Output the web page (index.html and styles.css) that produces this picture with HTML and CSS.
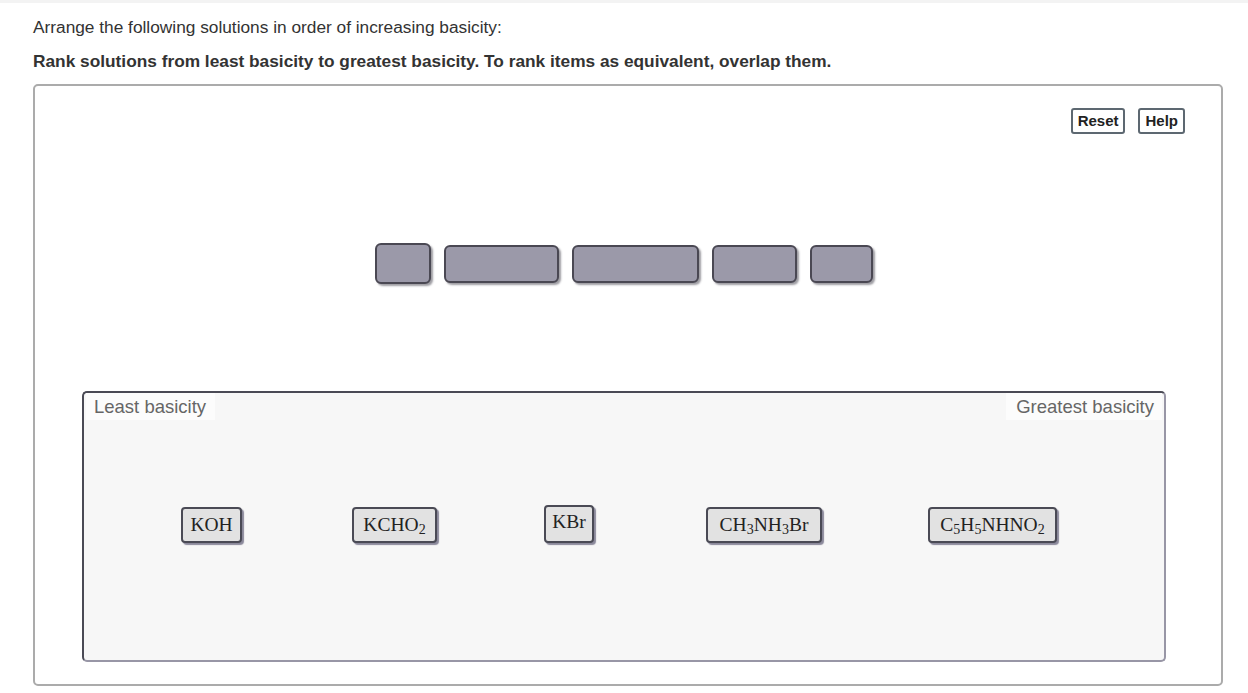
FILE: index.html
```html
<!DOCTYPE html>
<html>
<head>
<meta charset="utf-8">
<link rel="stylesheet" href="styles.css">
</head>
<body>
<div class="topbar"></div>
<div class="content">
  <p class="prompt">Arrange the following solutions in order of increasing basicity:</p>
  <p class="instr">Rank solutions from least basicity to greatest basicity. To rank items as equivalent, overlap them.</p>
  <div class="panel">
    <div class="tools">
      <button class="btn">Reset</button>
      <button class="btn">Help</button>
    </div>
    <div class="slots">
      <div class="slot slot-a"></div>
      <div class="slot slot-b"></div>
      <div class="slot slot-c"></div>
      <div class="slot slot-d"></div>
      <div class="slot slot-e"></div>
    </div>
    <div class="rank">
      <div class="labels">
        <span class="label">Least basicity</span>
        <span class="label label-right">Greatest basicity</span>
      </div>
      <div class="items">
        <div class="item w-koh">KOH</div>
        <div class="item w-kcho2">KCHO<sub>2</sub></div>
        <div class="item item-tall w-kbr">KBr</div>
        <div class="item w-ch3">CH<sub>3</sub>NH<sub>3</sub>Br</div>
        <div class="item w-c5">C<sub>5</sub>H<sub>5</sub>NHNO<sub>2</sub></div>
      </div>
    </div>
  </div>
</div>
</body>
</html>
```
FILE: styles.css
```css
* { box-sizing: border-box; }
html, body { margin: 0; padding: 0; background: #fff; }
body { font-family: "Liberation Sans", Arial, sans-serif; color: #333; }
.topbar { height: 3px; background: #f3f3f3; }
.content { padding: 0 25px 0 33px; }
.prompt { margin: 14px 0 0; font-size: 17.3px; line-height: 20px; color: #333; }
.instr { margin: 14px 0 0; font-size: 17.3px; line-height: 20px; font-weight: bold; color: #333; }
.panel {
  margin-top: 13px;
  width: 1190px;
  height: 602px;
  border: 2px solid #ababab;
  border-radius: 5px;
  padding-top: 22px;
}
.tools { display: flex; justify-content: flex-end; gap: 13px; padding-right: 36px; }
.btn {
  font-family: "Liberation Sans", Arial, sans-serif;
  font-weight: bold;
  font-size: 15px;
  color: #222;
  background: #fff;
  height: 26px;
  padding: 0 5px;
  border: 2px solid #5d6871;
  border-radius: 3px;
  line-height: 22px;
}
.slots { display: flex; align-items: flex-start; gap: 13px; padding-left: 340px; margin-top: 109px; }
.slot {
  height: 38px;
  margin-top: 2px;
  background: #9b99a9;
  border: 2px solid #4a4853;
  border-radius: 6px;
  box-shadow: 2px 2px 2px rgba(40, 38, 50, 0.45);
}
.slot-a { width: 56px; height: 41px; margin-top: 0; }
.slot-b { width: 115px; }
.slot-c { width: 127px; }
.slot-d { width: 85px; }
.slot-e { width: 63px; }
.rank {
  margin: 107px 0 0 47px;
  width: 1084px;
  height: 271px;
  background: #f7f7f7;
  border: 2px solid #4a4a55;
  border-right-color: #9896a6;
  border-bottom-color: #9896a6;
  border-radius: 5px;
}
.labels { display: flex; justify-content: space-between; padding: 0 2px; }
.label {
  background: #fcfcfc;
  color: #666;
  font-size: 18.5px;
  line-height: 27px;
  height: 27px;
  padding: 0 9px 0 8px;
}
.label-right { padding: 0 8px 0 10px; }
.items { display: flex; align-items: flex-end; padding-left: 97px; margin-top: 85px; }
.item {
  height: 36px;
  background: #e2e2e2;
  border: 2px solid #4a4a55;
  border-radius: 4px;
  box-shadow: 2px 2px 1px #8b899b;
  font-family: "Liberation Serif", "Times New Roman", serif;
  font-size: 19.5px;
  color: #222;
  text-align: center;
  line-height: 31px;
  white-space: nowrap;
}
.item-tall { height: 38px; line-height: 30px; }
.item sub { font-size: 14px; vertical-align: -3px; line-height: 0; }
.w-koh { width: 61px; }
.w-kcho2 { width: 85px; margin-left: 110px; }
.w-kbr { width: 50px; margin-left: 107px; }
.w-ch3 { width: 116px; margin-left: 112px; }
.w-c5 { width: 129px; margin-left: 106px; }
```
